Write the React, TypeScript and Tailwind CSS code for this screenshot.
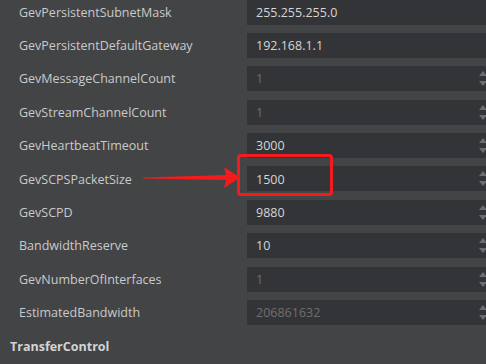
const rows: { label: string; value: string; enabled: boolean; spin: boolean }[] = [
  { label: "GevPersistentSubnetMask", value: "255.255.255.0", enabled: true, spin: false },
  { label: "GevPersistentDefaultGateway", value: "192.168.1.1", enabled: true, spin: false },
  { label: "GevMessageChannelCount", value: "1", enabled: false, spin: true },
  { label: "GevStreamChannelCount", value: "1", enabled: false, spin: true },
  { label: "GevHeartbeatTimeout", value: "3000", enabled: true, spin: true },
  { label: "GevSCPSPacketSize", value: "1500", enabled: true, spin: true },
  { label: "GevSCPD", value: "9880", enabled: true, spin: true },
  { label: "BandwidthReserve", value: "10", enabled: true, spin: true },
  { label: "GevNumberOfInterfaces", value: "1", enabled: false, spin: true },
  { label: "EstimatedBandwidth", value: "206861632", enabled: false, spin: true },
];

function Spinner() {
  return (
    <div className="absolute right-[3px] top-0 h-full flex flex-col justify-center gap-[5px]">
      <div className="w-0 h-0 border-l-[4px] border-r-[4px] border-b-[5px] border-l-transparent border-r-transparent border-b-[#6b6c6f]" />
      <div className="w-0 h-0 border-l-[4px] border-r-[4px] border-t-[5px] border-l-transparent border-r-transparent border-t-[#6b6c6f]" />
    </div>
  );
}

export default function App() {
  return (
    <div
      className="relative w-[486px] h-[364px] overflow-hidden bg-[#434446] text-[12.5px]"
      style={{ fontFamily: '"Open Sans", "Noto Sans", sans-serif' }}
    >
      <div className="flex flex-col -mt-[0.5px]">
        {rows.map((r) => (
          <div key={r.label} className="flex h-[33.4px]">
            <div className="w-[247px] shrink-0 pl-[19px] pt-[2px] h-[25px] flex items-center text-[#c9cacb]">
              {r.label}
            </div>
            <div className="relative w-[243px] shrink-0 h-[25px] bg-[#333437] flex items-center pl-[9px] pt-[2px]">
              <span className={r.enabled ? "text-[#d6d6d6]" : "text-[#6e6f72]"}>{r.value}</span>
              {r.spin && <Spinner />}
            </div>
          </div>
        ))}
        <div className="pl-[10px] pt-[5px] font-bold text-[#d2d3d5]">TransferControl</div>
      </div>

      {/* red highlight box */}
      <div className="absolute left-[237px] top-[154px] w-[96px] h-[42px] border-[3.5px] border-[#f31b1b] rounded-[4px]" />

      {/* arrow */}
      <svg className="absolute left-0 top-0" width="486" height="364">
        <polygon points="143,177.5 226,175 224,167 240,177.5 224,188 226,180 143,178.5" fill="#f31b1b" />
      </svg>
    </div>
  );
}
